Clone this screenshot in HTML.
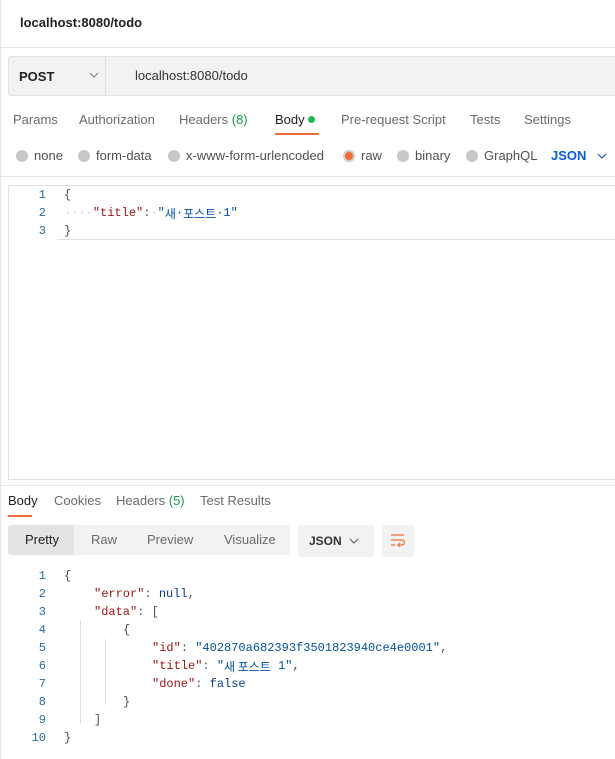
<!DOCTYPE html>
<html><head><meta charset="utf-8"><style>
body{margin:0;width:615px;height:759px;overflow:hidden;background:#fff;font-family:"Liberation Sans","Noto Sans CJK KR",sans-serif;font-size:13px;color:#505050;position:relative}
.a{position:absolute;white-space:nowrap;line-height:15px}
.mono{font-family:"Liberation Mono","Noto Sans CJK KR",monospace;font-size:12px}
.mono .a,.mono .ln{line-height:15px;height:15px;overflow:visible}
.ln{position:absolute;width:38px;text-align:right;color:#2a6c9c;left:8px}
.k{color:#a31515}.s{color:#0451a5}.b{color:#0b3a8c}
.radio{display:inline-block;width:12px;height:12px;border-radius:50%;background:#c8c8c8;vertical-align:-2px;margin-right:6px}
.kr{font-family:"Noto Sans CJK KR",sans-serif;font-size:12px;line-height:15px;display:inline-block;height:15px;vertical-align:top}
</style></head><body>
<div class="a" style="left:0;top:0;width:1px;height:759px;background:#e6e6e6"></div>
<div class="a" style="left:20px;top:15px;font-weight:bold;color:#212121;font-size:13px">localhost:8080/todo</div>
<div class="a" style="left:0;top:47px;width:615px;height:1px;background:#e6e6e6"></div>
<div class="a" style="left:8px;top:56px;width:607px;height:38px;background:#f2f2f2;border:1px solid #e3e3e3;border-right:none;border-radius:3px 0 0 3px"></div>
<div class="a" style="left:105px;top:57px;width:1px;height:38px;background:#e0e0e0"></div>
<div class="a" style="left:19px;top:69px;font-weight:bold;color:#212121">POST</div>
<svg class="a" style="left:89px;top:72px" width="10" height="6" viewBox="0 0 10 6"><path d="M1 1l4 4 4-4" fill="none" stroke="#777" stroke-width="1"/></svg>
<div class="a" style="left:135px;top:68px;color:#333">localhost:8080/todo</div>
<div class="a" style="top:112px;left:13px;color:#6b6b6b">Params</div>
<div class="a" style="top:112px;left:79px;color:#6b6b6b">Authorization</div>
<div class="a" style="top:112px;left:179px;color:#6b6b6b">Headers <span style="color:#1a9a4a">(8)</span></div>
<div class="a" style="top:112px;left:275px;color:#212121">Body <span style="display:inline-block;width:7px;height:7px;border-radius:50%;background:#1eb950;vertical-align:1px"></span></div>
<div class="a" style="left:275px;top:133px;width:44px;height:2px;background:#f26b3a"></div>
<div class="a" style="top:112px;left:341px;color:#6b6b6b">Pre-request Script</div>
<div class="a" style="top:112px;left:470px;color:#6b6b6b">Tests</div>
<div class="a" style="top:112px;left:524px;color:#6b6b6b">Settings</div>
<div class="a" style="top:148px;left:16px;color:#505050"><span class="radio"></span>none</div>
<div class="a" style="top:148px;left:78px;color:#505050"><span class="radio"></span>form-data</div>
<div class="a" style="top:148px;left:168px;color:#505050"><span class="radio"></span>x-www-form-urlencoded</div>
<div class="a" style="top:148px;left:343px;color:#505050"><span class="radio" style="background:#f26b3a;box-shadow:inset 0 0 0 2px #d0d0d0"></span>raw</div>
<div class="a" style="top:148px;left:397px;color:#505050"><span class="radio"></span>binary</div>
<div class="a" style="top:148px;left:466px;color:#505050"><span class="radio"></span>GraphQL</div>
<div class="a" style="top:148px;left:551px;color:#0b5cd1;font-weight:bold">JSON</div>
<svg class="a" style="left:597px;top:153px" width="10" height="6" viewBox="0 0 10 6"><path d="M1 1l4 4 4-4" fill="none" stroke="#0b5cd1" stroke-width="1.2"/></svg>
<div class="a" style="left:0;top:176px;width:615px;height:1px;background:#e6e6e6"></div>
<div class="a" style="left:8px;top:185px;width:607px;height:293px;border:1px solid #e0e0e0;border-right:none"></div>
<div class="a" style="left:57px;top:239px;width:558px;height:1px;background:#e0e0e0"></div>
<div class="mono">
<div class="ln" style="top:188px">1</div><div class="ln" style="top:206px">2</div><div class="ln" style="top:224px">3</div>
<div class="a" style="left:64px;top:188px">{</div>
<div class="a" style="left:64px;top:206px"><span style="color:#ccc">····</span><span class="k">"title"</span>:<span style="color:#ccc">·</span><span class="s">"<span class="kr">새</span>·<span class="kr">포스트</span>·1"</span></div>
<div class="a" style="left:64px;top:224px">}</div>
</div>
<div class="a" style="left:0;top:485px;width:615px;height:1px;background:#e6e6e6"></div>
<div class="a" style="top:493px;left:8px;color:#212121">Body</div>
<div class="a" style="left:8px;top:515px;width:24px;height:2px;background:#f26b3a"></div>
<div class="a" style="top:493px;left:54px;color:#6b6b6b">Cookies</div>
<div class="a" style="top:493px;left:116px;color:#6b6b6b">Headers <span style="color:#1a9a4a">(5)</span></div>
<div class="a" style="top:493px;left:200px;color:#6b6b6b">Test Results</div>
<div class="a" style="left:8px;top:525px;width:282px;height:30px;background:#f2f2f2;border-radius:3px"></div>
<div class="a" style="left:8px;top:525px;width:66px;height:30px;background:#e4e4e4;border-radius:3px 0 0 3px"></div>
<div class="a" style="top:532px;left:25px;color:#212121">Pretty</div>
<div class="a" style="top:532px;left:91px;color:#6b6b6b">Raw</div>
<div class="a" style="top:532px;left:147px;color:#6b6b6b">Preview</div>
<div class="a" style="top:532px;left:224px;color:#6b6b6b">Visualize</div>
<div class="a" style="left:298px;top:525px;width:76px;height:32px;background:#f2f2f2;border-radius:3px"></div>
<div class="a" style="top:534px;left:309px;color:#333;font-weight:bold;font-size:12px">JSON</div>
<svg class="a" style="left:349px;top:538px" width="10" height="6" viewBox="0 0 10 6"><path d="M1 1l4 4 4-4" fill="none" stroke="#555" stroke-width="1"/></svg>
<div class="a" style="left:382px;top:525px;width:32px;height:32px;background:#f2f2f2;border-radius:3px"></div>
<svg class="a" style="left:390px;top:533px" width="16" height="16" viewBox="0 0 16 16" fill="none" stroke="#f26b3a" stroke-width="1.2"><path d="M1 2h13M1 7h11a2.5 2.5 0 0 1 0 5H8M10 10l-2 2 2 2M1 12h4"/></svg>
<div class="mono">
<div class="ln" style="top:569px">1</div><div class="ln" style="top:587px">2</div><div class="ln" style="top:605px">3</div><div class="ln" style="top:623px">4</div><div class="ln" style="top:641px">5</div><div class="ln" style="top:659px">6</div><div class="ln" style="top:677px">7</div><div class="ln" style="top:695px">8</div><div class="ln" style="top:713px">9</div><div class="ln" style="top:731px">10</div>
<div class="a" style="left:80px;top:621px;width:1px;height:102px;background:#ddd"></div>
<div class="a" style="left:105px;top:639px;width:1px;height:66px;background:#ddd"></div>
<div class="a" style="left:64px;top:569px">{</div>
<div class="a" style="left:94px;top:587px"><span class="k">"error"</span>: <span class="b">null</span>,</div>
<div class="a" style="left:94px;top:605px"><span class="k">"data"</span>: [</div>
<div class="a" style="left:123px;top:623px">{</div>
<div class="a" style="left:152px;top:641px"><span class="k">"id"</span>: <span class="s">"402870a682393f3501823940ce4e0001"</span>,</div>
<div class="a" style="left:152px;top:659px"><span class="k">"title"</span>: <span class="s">"<span class="kr">새 포스트</span> 1"</span>,</div>
<div class="a" style="left:152px;top:677px"><span class="k">"done"</span>: <span class="b">false</span></div>
<div class="a" style="left:123px;top:695px">}</div>
<div class="a" style="left:94px;top:713px">]</div>
<div class="a" style="left:64px;top:731px">}</div>
</div>
</body></html>
